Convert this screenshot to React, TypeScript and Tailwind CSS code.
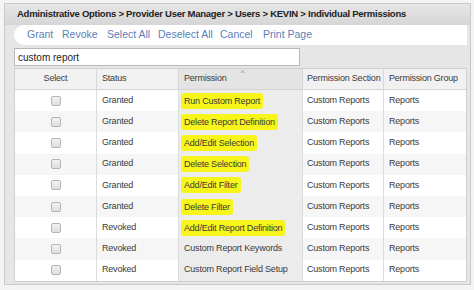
const ROWS = [
  { status: 'Granted', perm: 'Run Custom Report', hl: true },
  { status: 'Granted', perm: 'Delete Report Definition', hl: true },
  { status: 'Granted', perm: 'Add/Edit Selection', hl: true },
  { status: 'Granted', perm: 'Delete Selection', hl: true },
  { status: 'Granted', perm: 'Add/Edit Filter', hl: true },
  { status: 'Granted', perm: 'Delete Filter', hl: true },
  { status: 'Revoked', perm: 'Add/Edit Report Definition', hl: true },
  { status: 'Revoked', perm: 'Custom Report Keywords', hl: false },
  { status: 'Revoked', perm: 'Custom Report Field Setup', hl: false },
];

const LINKS = [
  { label: 'Grant', w: 'w-[35px]' },
  { label: 'Revoke', w: 'w-[45px]' },
  { label: 'Select All', w: 'w-[51px]' },
  { label: 'Deselect All', w: 'w-[62px]' },
  { label: 'Cancel', w: 'w-[43px]' },
  { label: 'Print Page', w: 'w-[60px]' },
];

export default function App() {
  return (
    <div className="h-[290px] w-[474px] bg-[#f4f4f4] pl-[4px] pr-[3px] pt-[3px] font-['Liberation_Sans',Arial,sans-serif] text-[#3a3a3a]">
      <div className="flex h-[282px] flex-col border border-[#c8c8c8] bg-[#dcdcdc]">
        {/* title bar */}
        <div className="flex h-[21px] shrink-0 items-center whitespace-nowrap bg-gradient-to-b from-[#e6e6e6] to-[#d6d6d6] pl-[12px] text-[9.5px] font-bold tracking-[-0.25px] text-[#222]">
          Administrative Options &gt; Provider User Manager &gt; Users &gt; KEVIN &gt; Individual Permissions
        </div>

        <div className="flex flex-1 flex-col bg-[#e6e6e6] pl-[9px] pr-[3px]">
          {/* toolbar */}
          <div className="flex h-[20px] shrink-0 items-center rounded-l-[10px] bg-white pl-[13px] text-[10.5px] text-[#5a7fb8]">
            {LINKS.map((l) => (
              <span key={l.label} className={`${l.w} shrink-0 whitespace-nowrap`}>
                {l.label}
              </span>
            ))}
          </div>

          {/* search */}
          <div className="pt-[3px]">
            <div className="flex h-[18px] w-[286px] items-center border border-[#b8b8b8] bg-white pl-[3px] text-[10px] text-[#222]">
              custom report
            </div>
          </div>

          {/* table */}
          <div className="mt-[2px] flex w-[453px] flex-col whitespace-nowrap border border-[#cfcfcf] bg-white text-[9px] tracking-[-0.2px]">
            <div className="grid h-[21px] grid-cols-[82px_82px_124px_81px_1fr] border-b border-[#d4d4d4] bg-[#f1f1f1]">
              <div className="flex items-center justify-center border-r border-[#d8d8d8]">Select</div>
              <div className="flex items-center border-r border-[#d8d8d8] pl-[5px]">Status</div>
              <div className="relative flex items-center border-r border-[#d8d8d8] bg-[#e4e4e4] pl-[5px]">
                Permission
                <span className="absolute left-[62px] top-[-1px] text-[7px] text-[#777]">^</span>
              </div>
              <div className="flex items-center border-r border-[#d8d8d8] pl-[4px]">Permission Section</div>
              <div className="flex items-center pl-[5px]">Permission Group</div>
            </div>
            {ROWS.map((r, i) => (
              <div
                key={r.perm}
                className={`grid h-[21.2px] grid-cols-[82px_82px_124px_81px_1fr] ${i % 2 === 1 ? 'bg-[#f6f6f6]' : 'bg-white'}`}
              >
                <div className="flex items-center justify-center border-r border-[#dcdcdc]">
                  <span className="h-[10px] w-[10px] rounded-[2px] border border-[#b4b4b4] bg-gradient-to-b from-[#f2f2f2] to-[#dedede]" />
                </div>
                <div className="flex items-center border-r border-[#dcdcdc] pl-[5px]">{r.status}</div>
                <div className="flex items-center border-r border-[#dcdcdc] bg-[#ececec] pl-[2px]">
                  {r.hl ? (
                    <span className="rounded-[3px] bg-[#f8f51a] px-[3px] py-[2px] leading-[12px]">{r.perm}</span>
                  ) : (
                    <span className="px-[3px]">{r.perm}</span>
                  )}
                </div>
                <div className="flex items-center border-r border-[#dcdcdc] pl-[4px]">Custom Reports</div>
                <div className="flex items-center pl-[5px]">Reports</div>
              </div>
            ))}
          </div>
        </div>
      </div>
    </div>
  );
}
